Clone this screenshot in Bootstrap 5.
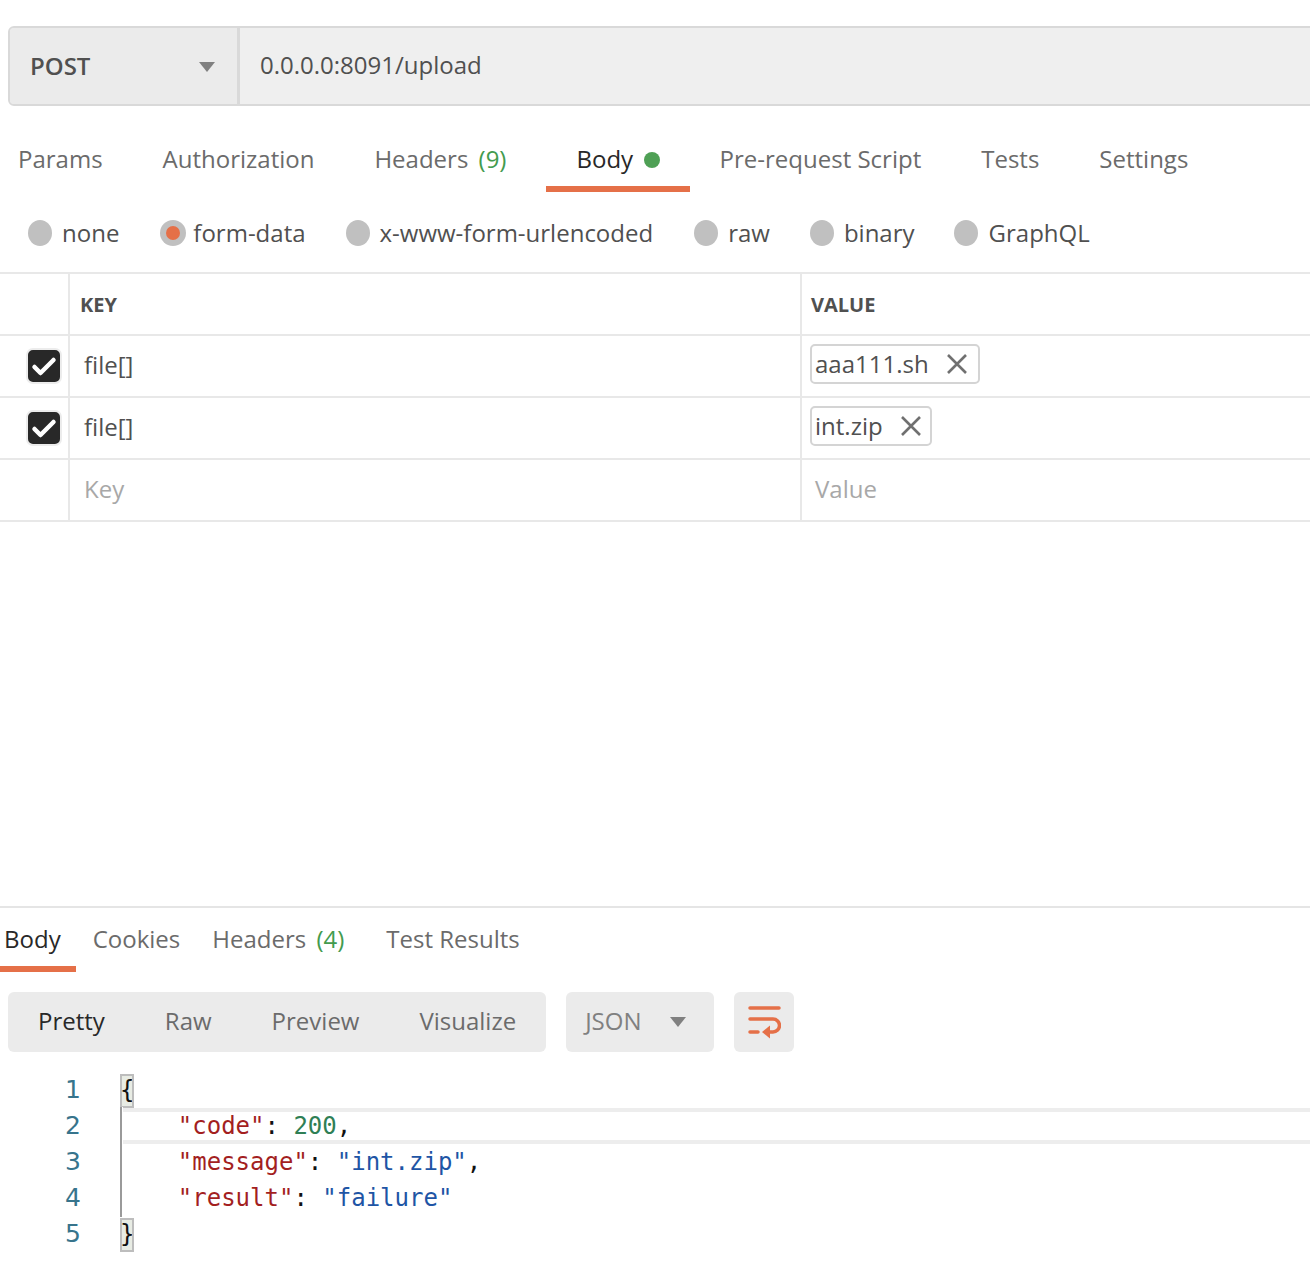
<!DOCTYPE html>
<html lang="en">
<head>
<meta charset="utf-8">
<title>Postman request</title>
<link href="https://cdn.jsdelivr.net/npm/bootstrap@5.3.0/dist/css/bootstrap.min.css" rel="stylesheet">
<style>
html,body{height:1272px;overflow:hidden;background:#fff}
body{font-family:"Open Sans",sans-serif;font-size:24px;color:#505050;width:1310px}
.req-bar{margin:26px -10px 0 8px;height:80px;border:2px solid #d9d9d9;border-radius:6px;background:#efefef;overflow:hidden}
.req-method{width:230px;background:#ebebeb;border-right:3px solid #d9d9d9;padding:0 22px 0 20px;font-weight:600}
.caret-down{width:0;height:0;border-left:8px solid transparent;border-right:8px solid transparent;border-top:10px solid #808080;margin-top:2px}
.req-url{padding:0 20px 2px 20px}
.req-tabs{height:86px}
.tab-item{padding:32px 30px 6px;height:86px;color:#6b6b6b;border-bottom:6px solid transparent;white-space:nowrap}
.tab-item:first-child{padding-left:18px}
.tab-item.wide{padding-right:40px}
.tab-item.on{color:#282828;border-bottom-color:#e57048}
.tab-item.on+.tab-item{padding-left:29.500px}
.cnt{color:#439b4e;margin-left:4px}
.dot-on{width:16px;height:16px;border-radius:50%;background:#4fa055;margin-left:11px;margin-top:1px}
.radios{height:80px;padding:2px 0 0 28px}
.radio-opt{white-space:nowrap;margin-right:41px}
.radio-opt:nth-child(2),.radio-opt:nth-child(4){margin-right:40px}
.radio-opt:nth-child(5){margin-right:39px}
.radio-disc{width:24px;height:26px;border-radius:50%;background:#c0c0c0;margin-right:10px;flex:none;display:flex;align-items:center;justify-content:center}
.radio-opt:last-child .radio-disc{margin-right:11px}
.radio-disc.sel{width:26px;margin-right:7px}
.radio-disc.sel::after{content:"";width:14px;height:14px;border-radius:50%;background:#e57048}
.kv{table-layout:fixed;width:1310px;border-collapse:collapse}
.kv td,.kv th{height:62px;border:2px solid #e8e8e8;border-left:0;padding:0 10px;vertical-align:middle}
.kv tr>:last-child{border-right:0}
.kv th{font-size:20px;font-weight:700;color:#505050;padding-top:2px}
.kv th:last-child{padding-left:9px}
.kv td{padding-bottom:2px}
.kv td.k{padding-left:14px}
.kv td.k:last-child{padding-left:13px}
.kv .ph{color:#a8a8a8}
.kv .cell-check{padding:0}
.chk{width:36px;height:36px;margin:0 0 0 26px;background:#282828;border:2px solid #ececec;border-radius:7px;display:flex;align-items:center;justify-content:center}
.file-tag{display:flex;width:fit-content;align-items:center;height:40px;border:2px solid #d4d4d4;border-radius:5px;padding:0 10px 0 3px;margin:0 0 2px -2px}
.file-tag.long{padding-right:11px}
.file-tag.short{padding-right:9px}
.file-tag svg{margin-left:18px}
.spacer{height:384px}
.res-top{border-top:2px solid #e5e5e5;height:66px}
.res-tab{color:#6b6b6b;height:64px;padding:10px 16px 6px;border-bottom:6px solid transparent;white-space:nowrap}
.res-tab.on{color:#282828;border-bottom-color:#e57048;padding:10px 15px 6px 4px}
.res-tab.on+.res-tab{padding-left:17px}
.res-tab.last{padding-left:26px}
.toolbar{margin:20px 0 0 8px;height:60px}
.tool-group{height:60px;background:#ebebeb;border-radius:6px;color:#6b6b6b;padding-bottom:2px}
.fmt{padding:0 30px;white-space:nowrap}
.fmt.on{color:#282828}
.json-drop{width:148px;margin-left:20px;padding:0 28px 2px 19px;color:#808080}
.wrap-btn{width:60px;margin-left:20px;padding-bottom:0}
.code-area{margin-top:20px;font-family:"DejaVu Sans Mono","Liberation Mono",monospace;font-size:24px;line-height:36px;color:#111}
.ln-row{height:36px;white-space:pre}
.ln{width:81px;flex:none;text-align:right;color:#37748c;font-size:25px;font-family:"DejaVu Sans",sans-serif}
.cd{position:relative;margin-left:39px;flex:1;min-width:0}
.cd.rail::before{content:"";position:absolute;left:0;top:-1px;bottom:-1px;width:2px;background:#9a9a9a}
.cd.active{border-top:4px solid #ededed;border-bottom:4px solid #ededed;line-height:28px;height:36px}
.cd.active::before{top:-5px;bottom:-5px;width:3px;border-right:1px solid #fff}
.bracket{display:inline-block;background:#e8ece4;outline:2px solid #bdbdbd;outline-offset:-2px;width:14px;height:34px;line-height:32px;margin-top:-1px}
.s-k{color:#a31f1f}.s-n{color:#2f7f55}.s-s{color:#1e55a5}
</style>
</head>
<body>
<div class="req-bar d-flex">
  <div class="req-method d-flex align-items-center justify-content-between"><span>POST</span><span class="caret-down"></span></div>
  <div class="req-url d-flex align-items-center flex-grow-1">0.0.0.0:8091/upload</div>
</div>

<div class="req-tabs d-flex">
  <div class="tab-item d-flex align-items-center">Params</div>
  <div class="tab-item d-flex align-items-center">Authorization</div>
  <div class="tab-item wide d-flex align-items-center">Headers&nbsp;<span class="cnt">(9)</span></div>
  <div class="tab-item on d-flex align-items-center">Body<span class="dot-on"></span></div>
  <div class="tab-item d-flex align-items-center">Pre-request Script</div>
  <div class="tab-item d-flex align-items-center">Tests</div>
  <div class="tab-item d-flex align-items-center">Settings</div>
</div>

<div class="radios d-flex align-items-center">
  <div class="radio-opt d-flex align-items-center"><span class="radio-disc"></span>none</div>
  <div class="radio-opt d-flex align-items-center"><span class="radio-disc sel"></span>form-data</div>
  <div class="radio-opt d-flex align-items-center"><span class="radio-disc"></span>x-www-form-urlencoded</div>
  <div class="radio-opt d-flex align-items-center"><span class="radio-disc"></span>raw</div>
  <div class="radio-opt d-flex align-items-center"><span class="radio-disc"></span>binary</div>
  <div class="radio-opt d-flex align-items-center"><span class="radio-disc"></span>GraphQL</div>
</div>

<table class="kv">
  <colgroup><col style="width:69px"><col style="width:732px"><col></colgroup>
  <tr><th></th><th>KEY</th><th>VALUE</th></tr>
  <tr>
    <td class="cell-check"><div class="chk"><svg width="26" height="22" viewBox="0 0 26 22"><path d="M3.500 12l6 6L22.500 5" fill="none" stroke="#fff" stroke-width="4.500" stroke-linecap="round" stroke-linejoin="round"/></svg></div></td>
    <td class="k">file[]</td>
    <td><span class="file-tag long">aaa111.sh<svg width="20" height="20" viewBox="0 0 20 20"><path d="M1 1l18 18M19 1L1 19" stroke="#707070" stroke-width="2.600" fill="none"/></svg></span></td>
  </tr>
  <tr>
    <td class="cell-check"><div class="chk"><svg width="26" height="22" viewBox="0 0 26 22"><path d="M3.500 12l6 6L22.500 5" fill="none" stroke="#fff" stroke-width="4.500" stroke-linecap="round" stroke-linejoin="round"/></svg></div></td>
    <td class="k">file[]</td>
    <td><span class="file-tag short">int.zip<svg width="20" height="20" viewBox="0 0 20 20"><path d="M1 1l18 18M19 1L1 19" stroke="#707070" stroke-width="2.600" fill="none"/></svg></span></td>
  </tr>
  <tr><td></td><td class="k ph">Key</td><td class="k ph">Value</td></tr>
</table>

<div class="spacer"></div>

<div class="res-top d-flex">
  <div class="res-tab on d-flex align-items-center">Body</div>
  <div class="res-tab d-flex align-items-center">Cookies</div>
  <div class="res-tab d-flex align-items-center">Headers&nbsp;<span class="cnt">(4)</span></div>
  <div class="res-tab last d-flex align-items-center">Test Results</div>
</div>

<div class="toolbar d-flex">
  <div class="tool-group d-flex align-items-center">
    <div class="fmt on">Pretty</div><div class="fmt">Raw</div><div class="fmt">Preview</div><div class="fmt">Visualize</div>
  </div>
  <div class="tool-group json-drop d-flex align-items-center justify-content-between"><span>JSON</span><span class="caret-down"></span></div>
  <div class="tool-group wrap-btn d-flex align-items-center justify-content-center">
    <svg width="34" height="36" viewBox="0 0 34 36" fill="none" stroke="#e57048" stroke-width="3.500" stroke-linecap="round"><path d="M3 4h29M3 15h23a6.500 6.500 0 0 1 0 13h-6M3 28h8"/><path d="M23 21.500v13l-8-6.500z" fill="#e57048" stroke="none"/></svg>
  </div>
</div>

<div class="code-area">
  <div class="ln-row d-flex"><span class="ln">1</span><div class="cd"><span class="bracket">{</span></div></div>
  <div class="ln-row d-flex"><span class="ln">2</span><div class="cd rail active">    <span class="s-k">"code"</span>: <span class="s-n">200</span>,</div></div>
  <div class="ln-row d-flex"><span class="ln">3</span><div class="cd rail">    <span class="s-k">"message"</span>: <span class="s-s">"int.zip"</span>,</div></div>
  <div class="ln-row d-flex"><span class="ln">4</span><div class="cd rail">    <span class="s-k">"result"</span>: <span class="s-s">"failure"</span></div></div>
  <div class="ln-row d-flex"><span class="ln">5</span><div class="cd"><span class="bracket">}</span></div></div>
</div>
</body>
</html>
